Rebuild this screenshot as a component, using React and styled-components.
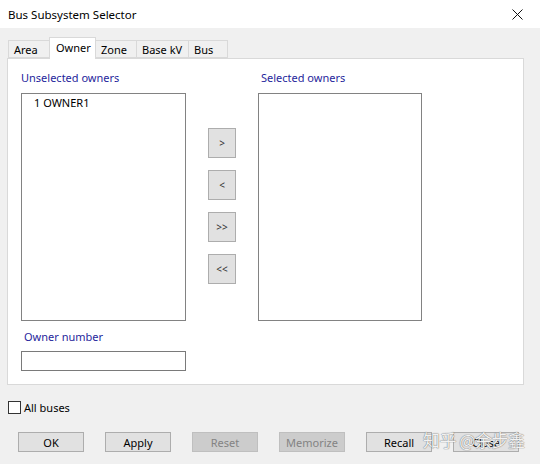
import React from "react";
import styled, { createGlobalStyle } from "styled-components";

const GlobalStyle = createGlobalStyle`
  html, body {
    margin: 0;
    padding: 0;
    background: #f0f0f0;
  }
  body {
    font-family: "Noto Sans", "Open Sans", Arial, sans-serif;
    font-size: 11px;
    color: #000;
  }
`;

const Window = styled.div`
  position: relative;
  width: 540px;
  height: 464px;
  background: #f0f0f0;
  overflow: hidden;
`;

const TitleBar = styled.div`
  height: 28px;
  background: #fff;
  display: flex;
  align-items: center;
  justify-content: space-between;
  padding: 0 17px 0 8px;
  font-size: 11.5px;
`;

const CloseIcon = styled.svg`
  width: 11px;
  height: 11px;
  display: block;
`;

const Body = styled.div`
  padding: 9px 16px 0 7px;
`;

const TabStrip = styled.div`
  display: flex;
  align-items: flex-end;
  height: 21px;
  padding-left: 1px;
  position: relative;
  z-index: 1;
`;

const Tab = styled.div`
  height: ${(p) => (p.$active ? "22px" : "18px")};
  padding: 0 ${(p) => (p.$active ? "6px" : "5px")};
  margin-bottom: ${(p) => (p.$active ? "-1px" : "0")};
  margin-left: ${(p) => (p.$active ? "-1px" : "0")};
  margin-right: ${(p) => (p.$active ? "-1px" : "0")};
  background: ${(p) => (p.$active ? "#fff" : "#f0f0f0")};
  border: 1px solid #d9d9d9;
  border-bottom: ${(p) => (p.$active ? "none" : "1px solid #d9d9d9")};
  border-right: ${(p) => (p.$last || p.$active ? "1px solid #d9d9d9" : "none")};
  display: flex;
  align-items: ${(p) => (p.$active ? "flex-start" : "center")};
  padding-top: ${(p) => (p.$active ? "2px" : "0")};
  box-sizing: border-box;
  width: ${(p) => p.$w}px;
  position: relative;
  z-index: ${(p) => (p.$active ? 2 : 1)};
`;

const Panel = styled.div`
  width: 517px;
  height: 327px;
  box-sizing: border-box;
  background: #fff;
  border: 1px solid #d9d9d9;
  padding: 11px 0 0 13px;
  display: grid;
  grid-template-columns: 165px 28px 164px;
  column-gap: 22px;
`;

const Column = styled.div`
  display: flex;
  flex-direction: column;
`;

const Label = styled.div`
  line-height: 16px;
  color: #1f1f9c;
  margin-left: ${(p) => p.$indent || 0}px;
  margin-top: ${(p) => p.$top || 0}px;
`;

const ListBox = styled.div`
  margin-top: 7px;
  height: 228px;
  box-sizing: border-box;
  border: 1px solid #828282;
  background: #fff;
  padding: 1px 0 0 12px;
  line-height: 15px;
`;

const TextInput = styled.div`
  margin-top: 6px;
  height: 20px;
  box-sizing: border-box;
  border: 1px solid #7a7a7a;
  background: #fff;
`;

const MoveButtons = styled.div`
  display: flex;
  flex-direction: column;
  gap: 12px;
  padding-top: 58px;
`;

const MoveButton = styled.div`
  width: 28px;
  height: 30px;
  box-sizing: border-box;
  background: #e1e1e1;
  border: 1px solid #adadad;
  display: flex;
  align-items: center;
  justify-content: center;
  font-size: 10px;
  color: #333;
`;

const CheckRow = styled.div`
  display: flex;
  align-items: center;
  gap: 3px;
  height: 13px;
  margin-top: 16px;
  margin-left: 1px;
`;

const CheckBox = styled.div`
  width: 13px;
  height: 13px;
  box-sizing: border-box;
  border: 1px solid #333;
  background: #fff;
`;

const ButtonRow = styled.div`
  display: flex;
  gap: 21px;
  margin-top: 18px;
  margin-left: 11px;
`;

const Button = styled.div`
  width: 66px;
  height: 20px;
  box-sizing: border-box;
  background: ${(p) => (p.$disabled ? "#cccccc" : "#e1e1e1")};
  border: 1px solid ${(p) => (p.$disabled ? "#bfbfbf" : "#adadad")};
  color: ${(p) => (p.$disabled ? "#838383" : "#000")};
  display: flex;
  align-items: center;
  justify-content: center;
`;

/* watermark printed over the bottom-right of the screenshot */
const Watermark = styled.div`
  position: absolute;
  left: 423px;
  top: 429px;
  font-family: "Noto Sans CJK SC", sans-serif;
  font-size: 17px;
  line-height: 22px;
  letter-spacing: -0.5px;
  color: rgba(255, 255, 255, 0.92);
  text-shadow: 0 0 1px #6f6f6f, 0 0 1px #8a8a8a;
  white-space: nowrap;
  pointer-events: none;
`;

const tabs = [
  { name: "Area", w: 42 },
  { name: "Owner", w: 47, active: true },
  { name: "Zone", w: 41 },
  { name: "Base kV", w: 52 },
  { name: "Bus", w: 40, last: true },
];

const buttons = [
  { label: "OK" },
  { label: "Apply" },
  { label: "Reset", disabled: true },
  { label: "Memorize", disabled: true },
  { label: "Recall" },
  { label: "Close" },
];

export default function App() {
  return (
    <Window>
      <GlobalStyle />
      <TitleBar>
        <span>Bus Subsystem Selector</span>
        <CloseIcon viewBox="0 0 11 11">
          <path d="M0.5 0.5 L10.5 10.5 M10.5 0.5 L0.5 10.5" stroke="#111" strokeWidth="1" fill="none" />
        </CloseIcon>
      </TitleBar>
      <Body>
        <TabStrip>
          {tabs.map((t) => (
            <Tab key={t.name} $active={t.active} $last={t.last} $w={t.w}>
              {t.name}
            </Tab>
          ))}
        </TabStrip>
        <Panel>
          <Column>
            <Label>Unselected owners</Label>
            <ListBox>1 OWNER1</ListBox>
            <Label $indent={3} $top={8}>Owner number</Label>
            <TextInput />
          </Column>
          <MoveButtons>
            <MoveButton>&gt;</MoveButton>
            <MoveButton>&lt;</MoveButton>
            <MoveButton>&gt;&gt;</MoveButton>
            <MoveButton>&lt;&lt;</MoveButton>
          </MoveButtons>
          <Column>
            <Label $indent={3}>Selected owners</Label>
            <ListBox />
          </Column>
        </Panel>
        <CheckRow>
          <CheckBox />
          <span>All buses</span>
        </CheckRow>
        <ButtonRow>
          {buttons.map((b) => (
            <Button key={b.label} $disabled={b.disabled}>
              {b.label}
            </Button>
          ))}
        </ButtonRow>
      </Body>
      <Watermark>知乎 @余步鑫</Watermark>
    </Window>
  );
}
